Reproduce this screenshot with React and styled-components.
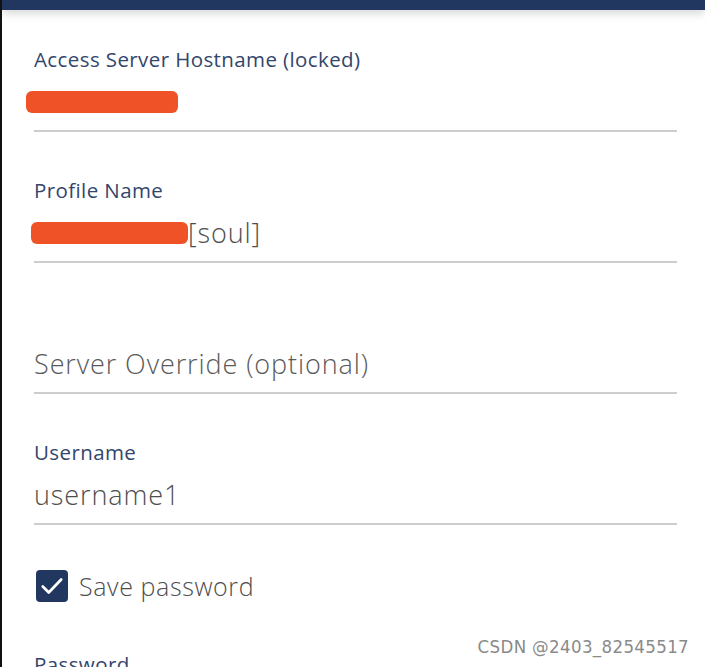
import React from 'react';
import styled, { createGlobalStyle } from 'styled-components';

const GlobalStyle = createGlobalStyle`
  html, body {
    margin: 0;
    padding: 0;
    background: #ffffff;
  }
  body {
    font-family: "Open Sans", "Lato", sans-serif;
  }
`;

const Screen = styled.div`
  position: relative;
  width: 705px;
  height: 667px;
  overflow: hidden;
  background: #ffffff;
  border-left: 2px solid #111111;
  box-sizing: border-box;
`;

const TopBar = styled.div`
  height: 10px;
  background: #22375f;
  box-shadow: 0 3px 10px rgba(0, 0, 0, 0.18);
  position: relative;
  z-index: 1;
`;

const Form = styled.div`
  display: flex;
  flex-direction: column;
  padding: 0 28px 0 32px;
`;

const Field = styled.div`
  display: flex;
  flex-direction: column;
  padding-top: ${p => p.$top}px;
  padding-bottom: 10px;
  border-bottom: 2px solid #cdcdcd;
`;

const Label = styled.div`
  height: 22px;
  line-height: 22px;
  font-size: 20.5px;
  font-weight: 400;
  letter-spacing: 0.4px;
  color: #33466b;
  margin-bottom: 14px;
  visibility: ${p => (p.$empty ? 'hidden' : 'visible')};
`;

const Value = styled.div`
  display: flex;
  align-items: center;
  height: 36px;
  line-height: 36px;
  font-size: 27px;
  font-weight: 300;
  letter-spacing: 0.9px;
  color: ${p => (p.$placeholder ? '#5a5a5a' : '#4e4e4e')};
  white-space: nowrap;
`;

const Redact = styled.span`
  display: inline-block;
  width: ${p => p.$w}px;
  height: 22px;
  margin-left: ${p => p.$shift}px;
  background: #ef5227;
  border-radius: 6px;
`;

const CheckRow = styled.label`
  display: flex;
  align-items: center;
  gap: 11px;
  margin-top: 44px;
  padding-left: 2px;
  font-size: 25px;
  font-weight: 300;
  letter-spacing: 0.6px;
  color: #4e4e4e;
`;

const Box = styled.span`
  width: 32px;
  height: 32px;
  border-radius: 4px;
  background: #22375f;
  display: flex;
  align-items: center;
  justify-content: center;
`;

const PasswordLabel = styled(Label)`
  margin-top: 50px;
`;

const Watermark = styled.div`
  position: absolute;
  right: 16px;
  top: 636px;
  font-family: "DejaVu Sans Condensed", "DejaVu Sans", sans-serif;
  font-size: 18.5px;
  color: #8a8a8a;
  letter-spacing: 0.35px;
`;

export default function App() {
  return (
    <Screen>
      <GlobalStyle />
      <TopBar />
      <Form>
        <Field $top={38}>
          <Label>Access Server Hostname (locked)</Label>
          <Value>
            <Redact $w={152} $shift={-8} />
          </Value>
        </Field>
        <Field $top={47}>
          <Label>Profile Name</Label>
          <Value>
            <Redact $w={157} $shift={-3} />
            [soul]
          </Value>
        </Field>
        <Field $top={47}>
          <Label $empty>&nbsp;</Label>
          <Value $placeholder>Server Override (optional)</Value>
        </Field>
        <Field $top={47}>
          <Label>Username</Label>
          <Value>username1</Value>
        </Field>
        <CheckRow>
          <Box>
            <svg width="26" height="26" viewBox="0 0 24 24" fill="none">
              <path d="M3.5 12.5l5.5 5.5L20.5 6" stroke="#ffffff" strokeWidth="2.5" strokeLinecap="round" strokeLinejoin="round" />
            </svg>
          </Box>
          Save password
        </CheckRow>
        <PasswordLabel>Password</PasswordLabel>
      </Form>
      <Watermark>CSDN @2403_82545517</Watermark>
    </Screen>
  );
}
